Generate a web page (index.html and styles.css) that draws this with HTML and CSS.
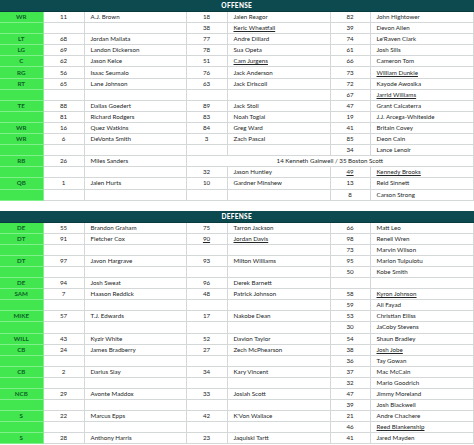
FILE: index.html
```html
<!DOCTYPE html>
<html>
<head>
<meta charset="utf-8">
<link rel="stylesheet" href="styles.css">
</head>
<body>
<div class="chart">
<table class="depth">
  <colgroup><col class="c-pos"><col class="c-num"><col class="c-name"><col class="c-num"><col class="c-name2"><col class="c-num3"><col></colgroup>
  <thead><tr><th colspan="7" class="unit">OFFENSE</th></tr></thead>
  <tbody>
    <tr><td class="pos">WR</td><td class="num">11</td><td class="name">A.J. Brown</td><td class="num">18</td><td class="name">Jalen Reagor</td><td class="num">82</td><td class="name">John Hightower</td></tr>
    <tr><td class="pos"></td><td></td><td></td><td class="num">38</td><td class="name"><span class="link">Keric Wheatfall</span></td><td class="num">39</td><td class="name">Devon Allen</td></tr>
    <tr><td class="pos">LT</td><td class="num">68</td><td class="name">Jordan Mailata</td><td class="num">77</td><td class="name">Andre Dillard</td><td class="num">74</td><td class="name">Le'Raven Clark</td></tr>
    <tr><td class="pos">LG</td><td class="num">69</td><td class="name">Landon Dickerson</td><td class="num">78</td><td class="name">Sua Opeta</td><td class="num">61</td><td class="name">Josh Sills</td></tr>
    <tr><td class="pos">C</td><td class="num">62</td><td class="name">Jason Kelce</td><td class="num">51</td><td class="name"><span class="link">Cam Jurgens</span></td><td class="num">66</td><td class="name">Cameron Tom</td></tr>
    <tr><td class="pos">RG</td><td class="num">56</td><td class="name">Isaac Seumalo</td><td class="num">76</td><td class="name">Jack Anderson</td><td class="num">73</td><td class="name"><span class="link">William Dunkle</span></td></tr>
    <tr><td class="pos">RT</td><td class="num">65</td><td class="name">Lane Johnson</td><td class="num">63</td><td class="name">Jack Driscoll</td><td class="num">72</td><td class="name">Kayode Awosika</td></tr>
    <tr><td class="pos"></td><td></td><td></td><td></td><td></td><td class="num">67</td><td class="name"><span class="link">Jarrid Williams</span></td></tr>
    <tr><td class="pos">TE</td><td class="num">88</td><td class="name">Dallas Goedert</td><td class="num">89</td><td class="name">Jack Stoll</td><td class="num">47</td><td class="name">Grant Calcaterra</td></tr>
    <tr><td class="pos"></td><td class="num">81</td><td class="name">Richard Rodgers</td><td class="num">83</td><td class="name">Noah Togiai</td><td class="num">19</td><td class="name">J.J. Arcega-Whiteside</td></tr>
    <tr><td class="pos">WR</td><td class="num">16</td><td class="name">Quez Watkins</td><td class="num">84</td><td class="name">Greg Ward</td><td class="num">41</td><td class="name">Britain Covey</td></tr>
    <tr><td class="pos">WR</td><td class="num">6</td><td class="name">DeVonta Smith</td><td class="num">3</td><td class="name">Zach Pascal</td><td class="num">85</td><td class="name">Deon Cain</td></tr>
    <tr><td class="pos"></td><td></td><td></td><td></td><td></td><td class="num">34</td><td class="name">Lance Lenoir</td></tr>
    <tr><td class="pos">RB</td><td class="num">26</td><td class="name">Miles Sanders</td><td colspan="4" class="span">14 Kenneth Gainwell / 35 Boston Scott</td></tr>
    <tr><td class="pos"></td><td></td><td></td><td class="num">32</td><td class="name">Jason Huntley</td><td class="num"><span class="link">49</span></td><td class="name"><span class="link">Kennedy Brooks</span></td></tr>
    <tr><td class="pos">QB</td><td class="num">1</td><td class="name">Jalen Hurts</td><td class="num">10</td><td class="name">Gardner Minshew</td><td class="num">13</td><td class="name">Reid Sinnett</td></tr>
    <tr><td class="pos"></td><td></td><td></td><td></td><td></td><td class="num">8</td><td class="name">Carson Strong</td></tr>
  </tbody>
</table>

<table class="depth defense">
  <colgroup><col class="c-pos"><col class="c-num"><col class="c-name"><col class="c-num"><col class="c-name2"><col class="c-num3"><col></colgroup>
  <thead><tr><th colspan="7" class="unit">DEFENSE</th></tr></thead>
  <tbody>
    <tr><td class="pos">DE</td><td class="num">55</td><td class="name">Brandon Graham</td><td class="num">75</td><td class="name">Tarron Jackson</td><td class="num">66</td><td class="name">Matt Leo</td></tr>
    <tr><td class="pos">DT</td><td class="num">91</td><td class="name">Fletcher Cox</td><td class="num"><span class="link">90</span></td><td class="name"><span class="link">Jordan Davis</span></td><td class="num">98</td><td class="name">Renell Wren</td></tr>
    <tr><td class="pos"></td><td></td><td></td><td></td><td></td><td class="num">73</td><td class="name">Marvin Wilson</td></tr>
    <tr><td class="pos">DT</td><td class="num">97</td><td class="name">Javon Hargrave</td><td class="num">93</td><td class="name">Milton Williams</td><td class="num">95</td><td class="name">Marlon Tuipulotu</td></tr>
    <tr><td class="pos"></td><td></td><td></td><td></td><td></td><td class="num">50</td><td class="name">Kobe Smith</td></tr>
    <tr><td class="pos">DE</td><td class="num">94</td><td class="name">Josh Sweat</td><td class="num">96</td><td class="name">Derek Barnett</td><td></td><td></td></tr>
    <tr><td class="pos">SAM</td><td class="num">7</td><td class="name">Haason Reddick</td><td class="num">48</td><td class="name">Patrick Johnson</td><td class="num">58</td><td class="name"><span class="link">Kyron Johnson</span></td></tr>
    <tr><td class="pos"></td><td></td><td></td><td></td><td></td><td class="num">59</td><td class="name">Ali Fayad</td></tr>
    <tr><td class="pos">MIKE</td><td class="num">57</td><td class="name">T.J. Edwards</td><td class="num">17</td><td class="name">Nakobe Dean</td><td class="num">53</td><td class="name">Christian Elliss</td></tr>
    <tr><td class="pos"></td><td></td><td></td><td></td><td></td><td class="num">30</td><td class="name">JaCoby Stevens</td></tr>
    <tr><td class="pos">WILL</td><td class="num">43</td><td class="name">Kyzir White</td><td class="num">52</td><td class="name">Davion Taylor</td><td class="num">54</td><td class="name">Shaun Bradley</td></tr>
    <tr><td class="pos">CB</td><td class="num">24</td><td class="name">James Bradberry</td><td class="num">27</td><td class="name">Zech McPhearson</td><td class="num">38</td><td class="name"><span class="link">Josh Jobe</span></td></tr>
    <tr><td class="pos"></td><td></td><td></td><td></td><td></td><td class="num">36</td><td class="name">Tay Gowan</td></tr>
    <tr><td class="pos">CB</td><td class="num">2</td><td class="name">Darius Slay</td><td class="num">34</td><td class="name">Kary Vincent</td><td class="num">37</td><td class="name">Mac McCain</td></tr>
    <tr><td class="pos"></td><td></td><td></td><td></td><td></td><td class="num">32</td><td class="name">Mario Goodrich</td></tr>
    <tr><td class="pos">NCB</td><td class="num">29</td><td class="name">Avonte Maddox</td><td class="num">33</td><td class="name">Josiah Scott</td><td class="num">47</td><td class="name">Jimmy Moreland</td></tr>
    <tr><td class="pos"></td><td></td><td></td><td></td><td></td><td class="num">39</td><td class="name">Josh Blackwell</td></tr>
    <tr><td class="pos">S</td><td class="num">22</td><td class="name">Marcus Epps</td><td class="num">42</td><td class="name">K'Von Wallace</td><td class="num">21</td><td class="name">Andre Chachere</td></tr>
    <tr><td class="pos"></td><td></td><td></td><td></td><td></td><td class="num">46</td><td class="name"><span class="link">Reed Blankenship</span></td></tr>
    <tr><td class="pos">S</td><td class="num">28</td><td class="name">Anthony Harris</td><td class="num">23</td><td class="name">Jaquiski Tartt</td><td class="num">41</td><td class="name">Jared Mayden</td></tr>
  </tbody>
</table>
</div>
</body>
</html>
```

FILE: styles.css
```css
html, body {
  margin: 0;
  padding: 0;
  background: #ffffff;
}

.chart {
  width: 474px;
  font-family: Lato, "Open Sans", "DejaVu Sans", sans-serif;
  color: #222626;
}

.depth {
  width: 474px;
  border-collapse: collapse;
  table-layout: fixed;
}

.defense {
  margin-top: 10px;
}

.c-pos { width: 43px; }
.c-num { width: 41px; }
.c-name { width: 102px; }
.c-name2 { width: 103px; }
.c-num3 { width: 40px; }

.unit {
  height: 11px;
  padding: 0;
  background: #0c4a4f;
  color: #ffffff;
  font-size: 6.5px;
  font-weight: 900;
  letter-spacing: 0.3px;
  text-align: center;
  line-height: 11px;
  border-bottom: 1px solid #083a3e;
}

.depth td {
  height: 10.1px;
  padding: 0;
  font-size: 6.2px;
  line-height: 10px;
  border: 1px solid #d4d8d8;
  white-space: nowrap;
  overflow: hidden;
}

.depth td.pos {
  background: #42e64f;
  color: #0d6226;
  font-weight: 700;
  text-align: center;
  border-color: #7ff08a;
  border-left: 0;
}

.depth td.num {
  text-align: center;
}

.depth td.name {
  padding-left: 6px;
}

.depth td.span {
  text-align: center;
}

.link {
  text-decoration: underline;
  text-decoration-thickness: 0.5px;
  text-underline-offset: 1px;
}
```
